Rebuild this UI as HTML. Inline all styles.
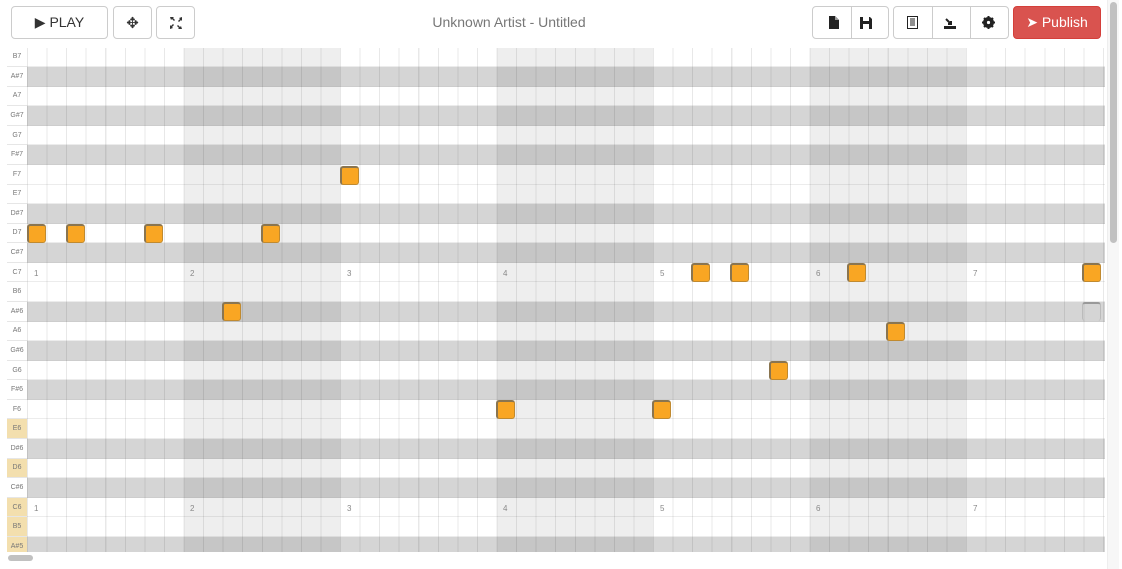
<!DOCTYPE html>
<html><head><meta charset="utf-8"><style>
*{box-sizing:border-box;margin:0;padding:0}
body{width:1122px;height:569px;overflow:hidden;background:#fff;font-family:"Liberation Sans",sans-serif;position:relative}
.btn{position:absolute;top:6px;height:33px;border:1px solid #ccc;border-radius:4px;background:#fff;display:flex;align-items:center;justify-content:center;color:#333;font-size:14px}
.title{position:absolute;top:14px;left:0;width:1018px;text-align:center;font-size:14px;color:#777}
.labels{position:absolute;left:7px;top:47.5px;width:20px;height:504px;overflow:hidden}
.lab{height:19.58px;border-bottom:1px solid #e6e6e6;font-size:7px;color:#777;display:flex;align-items:center;justify-content:center;background:#fff}
.lab.t{background:#f3dfae}
.grid{position:absolute;left:27px;top:47.5px;width:1078px;height:504px;overflow:hidden}
.row{height:19.58px;background:#fff;position:relative;border-bottom:1px solid #ececec}
.row.b{background:#d5d5d5;border-bottom-color:#cdcdcd}
.shade{position:absolute;top:0;height:100%;width:156.5px;background:rgba(0,0,0,0.065)}
.vl{position:absolute;inset:0;background:repeating-linear-gradient(90deg,rgba(0,0,0,0.09) 0 1px,transparent 1px 19.5625px)}
.num{position:absolute;font-size:8px;color:#888}
.n{position:absolute;width:19px;height:19px;border-radius:3px;background:#f9a623;border-top:2px solid #8a7550;border-left:2px solid #8a7550;border-right:1px solid #c08a30;border-bottom:1px solid #c08a30}
.vs{position:absolute;left:1107px;top:0;width:12px;height:569px;background:#f7f7f7;border-left:1px solid #eee}
.vs i{position:absolute;left:2px;top:2px;width:7px;height:241px;border-radius:4px;background:#c1c1c1}
.hs{position:absolute;left:8px;top:555px;width:25px;height:6px;border-radius:3px;background:#c1c1c1}
</style></head><body>
<div class="btn" style="left:11px;width:97px">&#9654;&nbsp;PLAY</div>
<div class="btn" style="left:113px;width:39px;font-size:15px">&#10021;</div>
<div class="btn" style="left:156px;width:39px"><svg width="12" height="12" viewBox="0 0 12 12" fill="#333"><path d="M0 0h4L3 1l2 2-1 1-2-2-1 1zM12 0v4l-1-1-2 2-1-1 2-2-1-1zM0 12V8l1 1 2-2 1 1-2 2 1 1zM12 12H8l1-1-2-2 1-1 2 2 1-1z"/></svg></div>
<div class="title">Unknown Artist - Untitled</div>
<div class="btn" style="left:812px;width:77px;justify-content:space-around;padding:0 6px">
<svg width="10" height="13" viewBox="0 0 10 13"><path d="M0 0h6l4 4v9H0z" fill="#222"/><path d="M6 0v4h4" fill="#999"/></svg>
<span style="position:absolute;left:38px;top:0;width:1px;height:31px;background:#ccc"></span>
<svg width="12" height="12" viewBox="0 0 12 12"><path d="M0 0h10l2 2v10H0z" fill="#222"/><rect x="3" y="0" width="6" height="4" fill="#fff"/><rect x="3" y="7" width="6" height="5" fill="#fff"/></svg></div>
<div class="btn" style="left:893px;width:116px;justify-content:space-around">
<svg width="11" height="13" viewBox="0 0 11 13"><rect x=".5" y=".5" width="10" height="12" fill="none" stroke="#222"/><path d="M3 3h5M3 5h5M3 7h5M3 9h5" stroke="#222"/></svg>
<span style="position:absolute;left:38px;top:0;width:1px;height:31px;background:#ccc"></span>
<svg width="12" height="12" viewBox="0 0 12 12"><path d="M0 10h12v2H0zM2 2l5 5M4 7h3V4" stroke="#222" stroke-width="2" fill="none"/></svg>
<span style="position:absolute;left:76px;top:0;width:1px;height:31px;background:#ccc"></span>
<svg width="13" height="13" viewBox="0 0 13 13"><circle cx="6.5" cy="6.5" r="4" fill="none" stroke="#222" stroke-width="3"/><path d="M6.5 0v13M0 6.5h13M2 2l9 9M11 2l-9 9" stroke="#222" stroke-width="2"/><circle cx="6.5" cy="6.5" r="1.6" fill="#fff"/></svg></div>
<div class="btn" style="left:1013px;width:88px;background:#d9534f;border-color:#d43f3a;color:#fff;font-size:14px">&#10148;&nbsp;Publish</div>

<div class="labels">
<div class="lab">B7</div><div class="lab">A#7</div><div class="lab">A7</div><div class="lab">G#7</div><div class="lab">G7</div><div class="lab">F#7</div><div class="lab">F7</div><div class="lab">E7</div><div class="lab">D#7</div><div class="lab">D7</div><div class="lab">C#7</div><div class="lab">C7</div><div class="lab">B6</div><div class="lab">A#6</div><div class="lab">A6</div><div class="lab">G#6</div><div class="lab">G6</div><div class="lab">F#6</div><div class="lab">F6</div><div class="lab t">E6</div><div class="lab">D#6</div><div class="lab t">D6</div><div class="lab">C#6</div><div class="lab t">C6</div><div class="lab t">B5</div><div class="lab t">A#5</div>
</div>

<div class="grid">
<div class="row"></div><div class="row b"></div><div class="row"></div><div class="row b"></div><div class="row"></div><div class="row b"></div><div class="row"></div><div class="row"></div><div class="row b"></div><div class="row"></div><div class="row b"></div><div class="row"></div><div class="row"></div><div class="row b"></div><div class="row"></div><div class="row b"></div><div class="row"></div><div class="row b"></div><div class="row"></div><div class="row"></div><div class="row b"></div><div class="row"></div><div class="row b"></div><div class="row"></div><div class="row"></div><div class="row b"></div>
<div class="shade" style="left:156.5px"></div><div class="shade" style="left:469.5px"></div><div class="shade" style="left:782.5px"></div>
<div class="vl"></div>
<div class="num" style="left:7px;top:221px">1</div><div class="num" style="left:163px;top:221px">2</div><div class="num" style="left:320px;top:221px">3</div><div class="num" style="left:476px;top:221px">4</div><div class="num" style="left:633px;top:221px">5</div><div class="num" style="left:789px;top:221px">6</div><div class="num" style="left:946px;top:221px">7</div>
<div class="num" style="left:7px;top:456px">1</div><div class="num" style="left:163px;top:456px">2</div><div class="num" style="left:320px;top:456px">3</div><div class="num" style="left:476px;top:456px">4</div><div class="num" style="left:633px;top:456px">5</div><div class="num" style="left:789px;top:456px">6</div><div class="num" style="left:946px;top:456px">7</div>
<div class="n" style="left:313px;top:118px"></div>
<div class="n" style="left:0px;top:176px"></div><div class="n" style="left:39px;top:176px"></div><div class="n" style="left:117px;top:176px"></div><div class="n" style="left:234px;top:176px"></div>
<div class="n" style="left:664px;top:215px"></div><div class="n" style="left:703px;top:215px"></div><div class="n" style="left:820px;top:215px"></div><div class="n" style="left:1055px;top:215px"></div>
<div class="n" style="left:195px;top:254px"></div>
<div class="n" style="left:859px;top:274px"></div>
<div class="n" style="left:742px;top:313px"></div>
<div class="n" style="left:469px;top:352px"></div><div class="n" style="left:625px;top:352px"></div>
<div style="position:absolute;left:1055px;top:254px;width:19px;height:19px;border-radius:3px;border-top:2px solid #999;border-left:1px solid #bbb;border-right:1px solid #bbb"></div>
</div>
<div class="vs"><i></i></div>
<div class="hs"></div>
</body></html>
